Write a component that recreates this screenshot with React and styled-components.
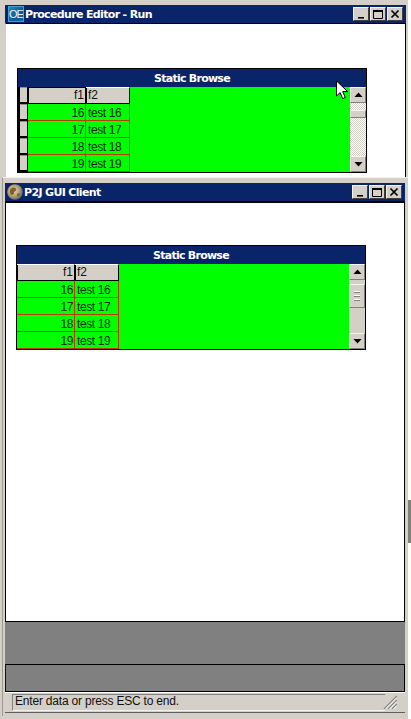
import React from 'react';
import styled, { createGlobalStyle } from 'styled-components';

const GlobalStyle = createGlobalStyle`
  html, body {
    margin: 0;
    background: #fff;
  }
  body {
    font-family: "Liberation Sans", Arial, sans-serif;
    overflow: hidden;
  }
`;

const Page = styled.div`
  position: relative;
  width: 408px;
  height: 719px;
  overflow: hidden;
  background: #d4d0c8;
`;

const BackWindow = styled.section`
  box-sizing: border-box;
  height: 177px;
  padding: 5px 2px 0 5px;
  overflow: hidden;
`;

const FrontWindow = styled.section`
  box-sizing: border-box;
  height: 539px;
  margin-left: 2px;
  padding: 5px 3px 0 2px;
  border-left: 1px solid #9c9a94;
  border-top: 1px solid #f4f3ef;
  display: flex;
  flex-direction: column;
`;

const TitleBar = styled.header`
  height: 18px;
  flex: none;
  display: flex;
  align-items: center;
  gap: 1px;
  padding: 0 3px 0 ${p => p.$left}px;
  background: #0a246a;
  color: #fff;
`;

const TitleText = styled.h1`
  margin: 0;
  flex: 1;
  font: bold 11px "DejaVu Sans", sans-serif;
  letter-spacing: -0.65px;
  white-space: nowrap;
`;

const OeLogo = styled.span`
  box-sizing: border-box;
  width: 16px;
  height: 16px;
  background: linear-gradient(135deg, #2f86b8, #0b5a96 60%, #1368a8);
  border: 1px solid #4d9ccb;
  color: #e8f4fb;
  font: 11px/14px "Liberation Sans", sans-serif;
  letter-spacing: -1px;
  text-align: center;
`;

const WinButtons = styled.div`
  display: flex;
  gap: 1px;
`;

const WinButton = styled.button`
  box-sizing: border-box;
  width: 16px;
  height: 14px;
  padding: 0;
  display: flex;
  align-items: center;
  justify-content: center;
  background: #d4d0c8;
  border: 1px solid;
  border-color: #f4f3ef #404040 #404040 #f4f3ef;
`;

const ClientBack = styled.div`
  height: 154px;
  padding: 44px 0 0 11px;
  background: #fff;
  border-top: 1px solid #000;
  border-left: 1px solid #d4d0c8;
  border-right: 1px solid #000;
`;

const ClientFront = styled.div`
  box-sizing: border-box;
  height: 421px;
  flex: none;
  padding: 42px 0 0 10px;
  background: #fff;
  border: 1px solid #000;
  border-top-width: 2px;
`;

const GreyArea = styled.div`
  height: 42px;
  flex: none;
  background: #808080;
`;

const MessagePanel = styled.div`
  box-sizing: border-box;
  height: 28px;
  flex: none;
  background: #808080;
  border: 1px solid #000;
  border-left-color: #111;
`;

const StatusBar = styled.footer`
  position: relative;
  flex: 1;
  padding: 1px 20px 0 7px;
  border-top: 1px solid #fff;
  border-bottom: 1px solid #5f5f5f;
  margin-bottom: 3px;
`;

const StatusField = styled.div`
  box-sizing: border-box;
  height: 17px;
  padding-left: 2px;
  border-top: 1px solid #808080;
  border-left: 1px solid #808080;
  border-bottom: 1px solid #f4f3ef;
  color: #111;
  font-size: 12px;
  line-height: 13px;
  letter-spacing: -0.2px;
  white-space: nowrap;
`;

const Grip = styled.svg`
  position: absolute;
  right: 8px;
  bottom: 3px;
`;

const Browse = styled.div`
  box-sizing: border-box;
  width: 350px;
  height: 105px;
  border: 1px solid #000;
  background: #00ff00;
  display: flex;
  flex-direction: column;
`;

const BrowseTitle = styled.div`
  height: 18px;
  flex: none;
  background: #0a246a;
  color: #fff;
  font: bold 11px/19px "DejaVu Sans", sans-serif;
  letter-spacing: -0.75px;
  text-align: center;
`;

const BrowseBody = styled.div`
  flex: 1;
  display: flex;
  min-height: 0;
`;

const Selectors = styled.div`
  width: 10px;
  display: flex;
  flex-direction: column;
  background: #000;
  padding: 0 1px 0 2px;
  box-sizing: border-box;
`;

const SelectorCell = styled.div`
  box-sizing: border-box;
  height: 17px;
  flex: none;
  background: #d4d0c8;
  border-bottom: 2px solid #000;
  border-top: 1px solid #8f8f8a;
`;

const Table = styled.div`
  display: grid;
  grid-template-columns: 58px 44px;
  grid-auto-rows: 17px;
  align-self: flex-start;
`;

const HeadCell = styled.div`
  box-sizing: border-box;
  padding: 0 1px 0 2px;
  background: #d4d0c8;
  border-top: 1px solid #fff;
  border-right: 1px solid #000;
  border-bottom: 1px solid #000;
  box-shadow: inset 1px 0 0 #000;
  color: #111;
  font-size: 12px;
  line-height: 15px;
  text-align: ${p => (p.$right ? 'right' : 'left')};
  outline: ${p => (p.$boxed ? '1px solid #000' : 'none')};
  outline-offset: -1px;
`;

const Cell = styled.div`
  box-sizing: border-box;
  padding: 0 1px 0 2px;
  border-right: 1px solid #b83c00;
  border-bottom: 1px solid #b83c00;
  color: #062a06;
  font-size: 12px;
  line-height: 18px;
  letter-spacing: -0.4px;
  text-align: ${p => (p.$right ? 'right' : 'left')};
  white-space: nowrap;
  overflow: hidden;
`;

const Fill = styled.div`
  flex: 1;
`;

const ScrollBar = styled.div`
  width: 16px;
  flex: none;
  display: flex;
  flex-direction: column;
  background: ${p => (p.$hatched
    ? 'repeating-conic-gradient(#d4d0c8 0 25%, #fff 0 50%) 0 0 / 2px 2px'
    : '#d4d0c8')};
`;

const ScrollButton = styled.div`
  box-sizing: border-box;
  height: 16px;
  flex: none;
  display: flex;
  align-items: center;
  justify-content: center;
  background: #d4d0c8;
  border: 1px solid;
  border-color: #f4f3ef #808080 #808080 #f4f3ef;
`;

const ScrollTrack = styled.div`
  flex: ${p => p.$size} 0 0;
`;

const ScrollThumb = styled.div`
  box-sizing: border-box;
  height: ${p => p.$height}px;
  flex: none;
  display: flex;
  align-items: center;
  justify-content: center;
  background: #d4d0c8;
  border: 1px solid;
  border-color: #f4f3ef #808080 #808080 #f4f3ef;
`;

const Cursor = styled.svg`
  position: absolute;
  left: 335px;
  top: 80px;
`;

const ScreenEdge = styled.div`
  position: absolute;
  top: 500px;
  left: 408px;
  width: 3px;
  height: 43px;
  background: #808080;
`;

const Screen = styled.div`
  position: relative;
  width: 411px;
  height: 719px;
  overflow: hidden;
`;

const rows = [16, 17, 18, 19];

function Caption({ logo, left, children }) {
  return (
    <TitleBar $left={left}>
      {logo}
      <TitleText>{children}</TitleText>
      <WinButtons>
        <WinButton aria-label="Minimize">
          <svg width="10" height="10" viewBox="0 0 10 10"><path d="M2 8h6v1.6H2z" fill="#000" /></svg>
        </WinButton>
        <WinButton aria-label="Maximize">
          <svg width="10" height="10" viewBox="0 0 10 10"><path d="M.5 1.5h9v8h-9z" fill="none" stroke="#000" /><path d="M0 1h10v2H0z" fill="#000" /></svg>
        </WinButton>
        <WinButton aria-label="Close">
          <svg width="10" height="10" viewBox="0 0 10 10"><path d="M1.5 1.5l7 7M8.5 1.5l-7 7" stroke="#000" strokeWidth="1.7" /></svg>
        </WinButton>
      </WinButtons>
    </TitleBar>
  );
}

function Arrow({ up }) {
  return (
    <svg width="9" height="6" viewBox="0 0 9 6">
      <path d={up ? 'M4.5 0.5L8.5 5H.5z' : 'M.5 1h8L4.5 5.5z'} fill="#000" />
    </svg>
  );
}

function BrowseWidget({ selector, hatched }) {
  return (
    <Browse>
      <BrowseTitle>Static Browse</BrowseTitle>
      <BrowseBody>
        {selector && (
          <Selectors>
            {['h', ...rows].map(r => <SelectorCell key={r} />)}
          </Selectors>
        )}
        <Table>
          <HeadCell $right $boxed={selector}>f1</HeadCell>
          <HeadCell>f2</HeadCell>
          {rows.map(r => (
            <React.Fragment key={r}>
              <Cell $right>{r}</Cell>
              <Cell>test {r}</Cell>
            </React.Fragment>
          ))}
        </Table>
        <Fill />
        <ScrollBar $hatched={hatched}>
          <ScrollButton><Arrow up /></ScrollButton>
          {hatched ? (
            <>
              <ScrollTrack $size={7} />
              <ScrollThumb $height={8} />
              <ScrollTrack $size={37} />
            </>
          ) : (
            <>
              <ScrollTrack $size={4} />
              <ScrollThumb $height={24}>
                <svg width="6" height="12" viewBox="0 0 6 12">
                  <path d="M0 1.5h6M0 5.5h6M0 9.5h6" stroke="#fff" />
                  <path d="M0 2.5h6M0 6.5h6M0 10.5h6" stroke="#808080" />
                </svg>
              </ScrollThumb>
              <ScrollTrack $size={24} />
            </>
          )}
          <ScrollButton><Arrow /></ScrollButton>
        </ScrollBar>
      </BrowseBody>
    </Browse>
  );
}

function Globe() {
  return (
    <svg width="16" height="16" viewBox="0 0 16 16">
      <defs>
        <radialGradient id="globe" cx="0.42" cy="0.42" r="0.65">
          <stop offset="0" stopColor="#f0dcae" />
          <stop offset="0.55" stopColor="#b89c70" />
          <stop offset="1" stopColor="#4a5a70" />
        </radialGradient>
      </defs>
      <circle cx="8" cy="8" r="7.8" fill="url(#globe)" />
      <path d="M3 6c2-3 5-3 6-1s-2 2-2 4-3 3-4 0zM10 10c1-1 3-1 3 0s-2 3-3 2z" fill="#7a6038" />
    </svg>
  );
}

export default function App() {
  return (
    <Screen>
      <GlobalStyle />
      <Page>
        <BackWindow>
          <Caption left={3} logo={<OeLogo>OE</OeLogo>}>Procedure Editor - Run</Caption>
          <ClientBack>
            <BrowseWidget selector hatched />
          </ClientBack>
        </BackWindow>
        <FrontWindow>
          <Caption left={2} logo={<Globe />}>P2J GUI Client</Caption>
          <ClientFront>
            <BrowseWidget />
          </ClientFront>
          <GreyArea />
          <MessagePanel />
          <StatusBar>
            <StatusField>Enter data or press ESC to end.</StatusField>
            <Grip width="14" height="14" viewBox="0 0 14 14">
              <path d="M1 14L14 1M5 14L14 5M9 14l5-5" stroke="#808080" strokeWidth="1.2" />
              <path d="M2.5 14L14 2.5M6.5 14L14 6.5M10.5 14l3.5-3.5" stroke="#fff" strokeWidth="1" />
            </Grip>
          </StatusBar>
        </FrontWindow>
      </Page>
      <ScreenEdge />
      <Cursor width="14" height="21" viewBox="0 0 14 21">
        <path d="M1.5 1v15l3.6-3.4 2.6 6 2.6-1.1-2.6-5.9h5z" fill="#fff" stroke="#000" strokeWidth="1" />
      </Cursor>
    </Screen>
  );
}
